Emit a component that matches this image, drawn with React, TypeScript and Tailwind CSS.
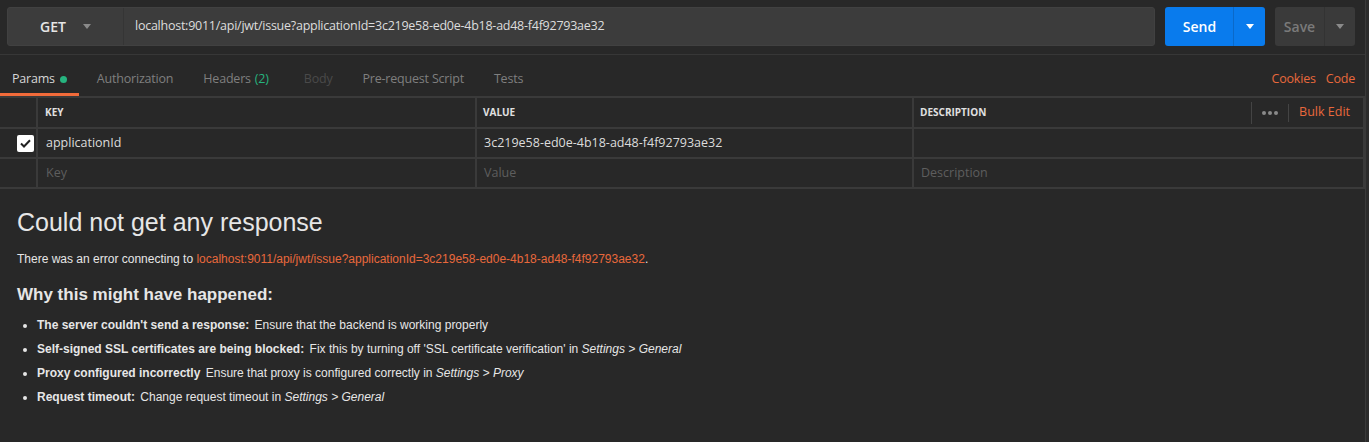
import React from "react";

const URL = "localhost:9011/api/jwt/issue?applicationId=3c219e58-ed0e-4b18-ad48-f4f92793ae32";

const tabs = [
  { label: "Params", active: true, dot: true },
  { label: "Authorization" },
  { label: "Headers", count: "(2)" },
  { label: "Body", disabled: true },
  { label: "Pre-request Script" },
  { label: "Tests" },
];

const Caret = ({ className }: { className: string }) => (
  <svg width="8" height="5" viewBox="0 0 8 5" className={className}>
    <path d="M0 0h8L4 5z" fill="currentColor" />
  </svg>
);

const reasons = [
  {
    label: "The server couldn't send a response:",
    text: <>Ensure that the backend is working properly</>,
  },
  {
    label: "Self-signed SSL certificates are being blocked:",
    text: (
      <>
        Fix this by turning off 'SSL certificate verification' in <i>Settings &gt; General</i>
      </>
    ),
  },
  {
    label: "Proxy configured incorrectly",
    text: (
      <>
        Ensure that proxy is configured correctly in <i>Settings &gt; Proxy</i>
      </>
    ),
  },
  {
    label: "Request timeout:",
    text: (
      <>
        Change request timeout in <i>Settings &gt; General</i>
      </>
    ),
  },
];

export default function App() {
  return (
    <div className="flex w-[1369px] h-[442px] bg-[#2c2c2c] overflow-hidden" style={{ fontFamily: '"Open Sans", sans-serif' }}>
      <div className="w-[1366px] h-full bg-[#282828] border-r border-[#3a3a3a] flex flex-col">
        {/* Request bar */}
        <div className="flex items-center h-[55px] pl-[7px] pr-[10px] pt-[5px] pb-[6px] border-b border-[#373737]">
          <div className="flex flex-1 h-[39px] bg-[#3c3c3c] rounded-[3px] border border-[#414141]">
            <div className="flex items-center w-[116px] border-r border-[#353535] pl-[32px] gap-[17px]">
              <span className="text-[14px] font-semibold text-[#e6e6e6]">GET</span>
              <Caret className="text-[#8a8a8a]" />
            </div>
            <div className="flex items-center pl-[11px] text-[12.5px] text-[#dcdcdc] tracking-[-0.25px]">{URL}</div>
          </div>
          <div className="flex h-[39px] ml-[10px] w-[100px] bg-[#097bed] rounded-[3px]">
            <div className="flex flex-1 items-center justify-center border-r border-[#0a69c9] text-[14px] font-semibold text-white pl-[1px]">Send</div>
            <div className="flex w-[31px] items-center justify-center">
              <Caret className="text-white" />
            </div>
          </div>
          <div className="flex h-[39px] ml-[10px] w-[80px] bg-[#3a3a3a] rounded-[3px]">
            <div className="flex flex-1 items-center justify-center border-r border-[#333333] text-[14px] font-semibold text-[#7a7a7a]">Save</div>
            <div className="flex w-[30px] items-center justify-center">
              <Caret className="text-[#8a8a8a]" />
            </div>
          </div>
        </div>

        {/* Tabs */}
        <div className="flex items-stretch h-[41px] pr-[10px]">
          {tabs.map((t) => (
            <div
              key={t.label}
              className={`relative flex items-center pt-[7px] px-[12px] mr-[6px] text-[12.5px] tracking-[-0.2px] ${
                t.active ? "text-[#d6d6d6]" : t.disabled ? "text-[#4a4a4a] ml-[5px]" : "text-[#7f7f7f]"
              }`}
            >
              {t.label}
              {t.count && <span className="ml-[4px] text-[#26b47f]">{t.count}</span>}
              {t.dot && <span className="ml-[5px] w-[7px] h-[7px] rounded-full bg-[#26b47f]" />}
              {t.active && <span className="absolute left-0 right-0 bottom-[0px] h-[3px] bg-[#f26b3a]" />}
            </div>
          ))}
          <div className="flex-1" />
          <div className="flex items-center pt-[7px] gap-[10px] text-[12.5px] tracking-[-0.2px] text-[#e8683c]">
            <span>Cookies</span>
            <span>Code</span>
          </div>
        </div>

        {/* Params table */}
        <div className="grid grid-cols-[38px_439px_437px_1fr] border-t-2 border-[#3a3a3a] text-[12.5px]">
          <div className="h-[31px] border-b-2 border-r-2 border-[#3a3a3a]" />
          <div className="h-[31px] flex items-center pl-[7px] border-b-2 border-r-2 border-[#3a3a3a] text-[10px] font-bold text-[#e0e0e0]">KEY</div>
          <div className="h-[31px] flex items-center pl-[6px] border-b-2 border-r-2 border-[#3a3a3a] text-[10px] font-bold text-[#e0e0e0]">VALUE</div>
          <div className="h-[31px] flex items-center pl-[6px] border-b-2 border-r-2 border-[#3a3a3a] text-[10px] font-bold text-[#e0e0e0]">
            <span className="flex-1">DESCRIPTION</span>
            <span className="h-[22px] border-l border-[#444444]" />
            <span className="flex gap-[2px] px-[10px]">
              <span className="w-[4px] h-[4px] rounded-full bg-[#8a8a8a]" />
              <span className="w-[4px] h-[4px] rounded-full bg-[#8a8a8a]" />
              <span className="w-[4px] h-[4px] rounded-full bg-[#8a8a8a]" />
            </span>
            <span className="h-[18px] border-l border-[#444444]" />
            <span className="pl-[10px] pr-[13px] text-[12.5px] font-normal text-[#e8683c]">Bulk Edit</span>
          </div>

          <div className="h-[30px] flex items-center justify-end pr-[2px] border-b-2 border-r-2 border-[#3a3a3a]">
            <span className="flex items-center justify-center w-[17px] h-[17px] rounded-[2px] bg-white">
              <svg width="11" height="9" viewBox="0 0 11 9">
                <path d="M1 4.5l3 3L10 1.2" stroke="#222" strokeWidth="2" fill="none" />
              </svg>
            </span>
          </div>
          <div className="h-[30px] flex items-center pl-[8px] border-b-2 border-r-2 border-[#3a3a3a] text-[#dcdcdc]">applicationId</div>
          <div className="h-[30px] flex items-center pl-[7px] border-b-2 border-r-2 border-[#3a3a3a] text-[#dcdcdc]">3c219e58-ed0e-4b18-ad48-f4f92793ae32</div>
          <div className="h-[30px] border-b-2 border-r-2 border-[#3a3a3a]" />

          <div className="h-[30px] border-b-2 border-r-2 border-[#3a3a3a]" />
          <div className="h-[30px] flex items-center pl-[8px] border-b-2 border-r-2 border-[#3a3a3a] text-[#5e5e5e]">Key</div>
          <div className="h-[30px] flex items-center pl-[7px] border-b-2 border-r-2 border-[#3a3a3a] text-[#5e5e5e]">Value</div>
          <div className="h-[30px] flex items-center pl-[7px] border-b-2 border-r-2 border-[#3a3a3a] text-[#5e5e5e]">Description</div>
        </div>

        {/* Response */}
        <div className="pl-[17px] pt-[16px] text-[#e6e6e6]" style={{ fontFamily: '"Liberation Sans", Arial, sans-serif' }}>
          <h1 className="text-[25px] font-normal leading-[34px]">Could not get any response</h1>
          <p className="mt-[12px] text-[12px] leading-[16px]">
            There was an error connecting to <span className="text-[#e8683c]">{URL}</span>.
          </p>
          <h2 className="mt-[17px] text-[17px] font-bold leading-[22px]">Why this might have happened:</h2>
          <ul className="mt-[11px] pl-[20px] list-disc text-[12px]">
            {reasons.map((r) => (
              <li key={r.label} className="leading-[16px] mb-[8px]">
                <b className="mr-[2px]">{r.label}</b> {r.text}
              </li>
            ))}
          </ul>
        </div>
      </div>
    </div>
  );
}
